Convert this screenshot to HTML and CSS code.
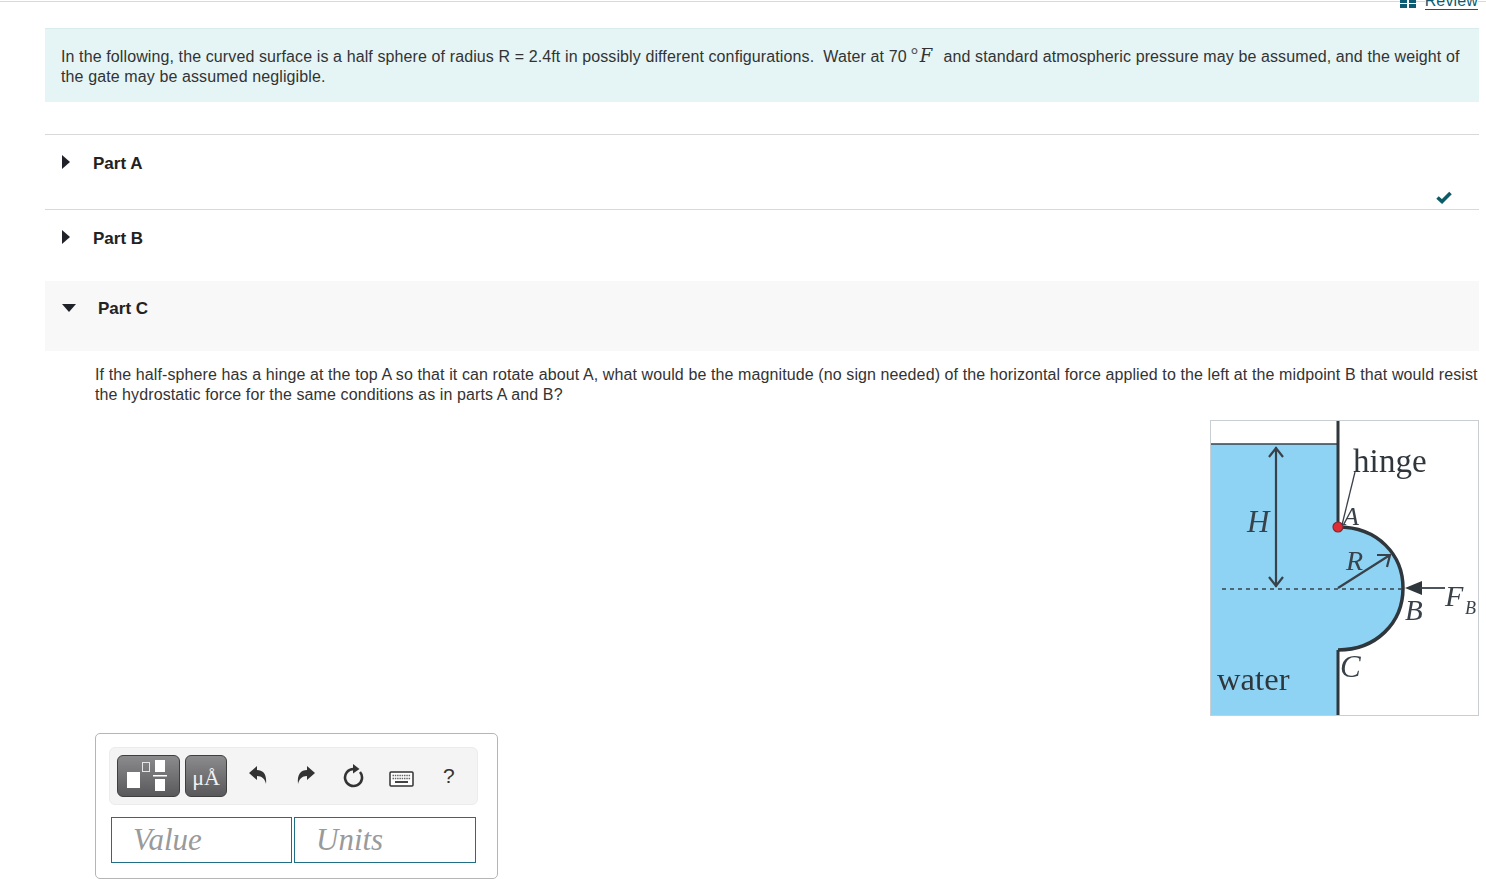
FILE: index.html
```html
<!DOCTYPE html>
<html lang="en">
<head>
<meta charset="utf-8">
<title>Part C</title>
<link rel="stylesheet" href="styles.css">
</head>
<body>
<div class="page">
  <header class="topbar">
    <a class="review" href="#">
      <svg class="review-icon" width="16" height="9" viewBox="0 0 16 9"><path d="M0 0h7v3H0zM9 0h7v3H9zM0 4h7v4H0zM9 4h7v4H9z" fill="#0b5c72"/></svg>
      <span class="review-text">Review</span>
    </a>
  </header>
  <section class="intro">
    <p>In the following, the curved surface is a half sphere of radius R = 2.4ft in possibly different configurations.&nbsp; Water at 70 <span class="deg">°</span><i class="mathf">F</i>&nbsp; and standard atmospheric pressure may be assumed, and the weight of the gate may be assumed negligible.</p>
  </section>
  <section class="part part-a">
    <svg class="caret" width="8" height="14" viewBox="0 0 8 14"><path d="M0 0l8 7-8 7z" fill="#1f2229"/></svg>
    <h2>Part A</h2>
    <svg class="check" width="16" height="13" viewBox="0 0 16 13"><path d="M1.500 6.500l4.500 4L14.500 2" fill="none" stroke="#0b5c66" stroke-width="3.600"/></svg>
  </section>
  <section class="part part-b">
    <svg class="caret" width="8" height="14" viewBox="0 0 8 14"><path d="M0 0l8 7-8 7z" fill="#1f2229"/></svg>
    <h2>Part B</h2>
  </section>
  <section class="part-c">
    <svg class="caret-down" width="14" height="8" viewBox="0 0 14 8"><path d="M0 0h14L7 8z" fill="#1f2229"/></svg>
    <h2>Part C</h2>
  </section>
  <section class="question">
    <p>If the half-sphere has a hinge at the top A so that it can rotate about A, what would be the magnitude (no sign needed) of the horizontal force applied to the left at the midpoint B that would resist the hydrostatic force for the same conditions as in parts A and B?</p>
    <figure class="diagram">
      <svg width="269" height="296" viewBox="0 0 269 296">
        <rect x="0.500" y="0.500" width="268" height="295" fill="#fff" stroke="#c9ced2"/>
        <path d="M1 24H128V107C168 107 193 135 193 168C193 203 166 230 128 230V295H1Z" fill="#8ed3f3"/>
        <path d="M1 24H128" stroke="#39424a" stroke-width="1.500"/>
        <path d="M128 1V107M128 230V295" stroke="#2f363c" stroke-width="3"/>
        <path d="M128 107C168 107 193 135 193 168C193 203 166 230 128 230" fill="none" stroke="#2f363c" stroke-width="3.500"/>
        <path d="M12 169H192" stroke="#39424a" stroke-width="1.500" stroke-dasharray="4 4"/>
        <path d="M66 27V167M59 37l7-9 7 9M59 157l7 9 7-9" fill="none" stroke="#39424a" stroke-width="2.200"/>
        <path d="M128 168L180 135M167 135h13l-3 12" fill="none" stroke="#39424a" stroke-width="2.200"/>
        <path d="M145 52L132 105" stroke="#39424a" stroke-width="1.300"/>
        <circle cx="128" cy="107" r="5" fill="#e02b35" stroke="#7e2b33" stroke-width="1.200"/>
        <path d="M195 168l17-7v14z" fill="#2f363c"/>
        <path d="M210 168H235" stroke="#39424a" stroke-width="1.800"/>
        <text class="dia-t" x="143" y="52" font-size="33">hinge</text>
        <text class="dia-t" x="7" y="270" font-size="32.500">water</text>
        <text class="dia-i" x="37" y="112" font-size="31">H</text>
        <text class="dia-i" x="133" y="105" font-size="26">A</text>
        <text class="dia-i" x="136" y="150" font-size="28">R</text>
        <text class="dia-i" x="195" y="200" font-size="29">B</text>
        <text class="dia-i" x="130" y="257" font-size="31">C</text>
        <text class="dia-i" x="235" y="186" font-size="30">F</text>
        <text class="dia-i" x="255" y="194" font-size="18">B</text>
      </svg>
    </figure>
  </section>
  <section class="answer">
    <div class="toolbar">
      <button class="tool tool-wide" type="button" aria-label="Templates">
        <svg width="61" height="40" viewBox="0 0 61 40">
          <rect x="9" y="16" width="13" height="16" fill="#fff"/>
          <rect x="24.500" y="6.500" width="7" height="9" fill="none" stroke="#e6e6e6"/>
          <rect x="37" y="4" width="10" height="12" fill="#fff"/>
          <rect x="35" y="19" width="14" height="1.500" fill="#fff"/>
          <rect x="37" y="23" width="10" height="12" fill="#fff"/>
        </svg>
      </button>
      <button class="tool tool-unit" type="button">μÅ</button>
      <svg class="action a-undo" width="18" height="20" viewBox="0 0 18 20"><path d="M0 7L8 0v4c6 0 10 4 9 14-1-5-4-8-9-8v4z" fill="#333"/></svg>
      <svg class="action a-redo" width="18" height="20" viewBox="0 0 18 20"><path d="M18 7L10 0v4C4 4 0 8 1 18c1-5 4-8 9-8v4z" fill="#333"/></svg>
      <svg class="action a-reset" width="22" height="24" viewBox="0 0 22 24"><path d="M10.500 5A8.500 8.500 0 1 0 17 8" fill="none" stroke="#333" stroke-width="2.600"/><path d="M10 0l6.500 5-6.500 4.500z" fill="#333"/></svg>
      <svg class="action a-kbd" width="25" height="16" viewBox="0 0 25 16"><rect x="1" y="1" width="23" height="14" rx="1" fill="#fff" stroke="#333" stroke-width="1.500"/><path d="M3.500 4.500h18M3.500 7.500h18" stroke="#666" stroke-width="1.500" stroke-dasharray="1.500 .8"/><path d="M6 11h13" stroke="#444" stroke-width="2"/></svg>
      <span class="help">?</span>
    </div>
    <div class="inputs">
      <div class="field field-value">Value</div>
      <div class="field field-units">Units</div>
    </div>
  </section>
</div>
</body>
</html>
```
FILE: styles.css
```css
* { box-sizing: border-box; }
html, body { margin: 0; padding: 0; background: #fff; }
body { font-family: "Liberation Sans", Arial, sans-serif; color: #333; font-size: 16px; overflow: hidden; }
p { margin: 0; }
h2 { margin: 1px 0 0; font-size: 17px; font-weight: bold; color: #222; line-height: 20px; }
.page { height: 879px; padding: 0 7px 0 45px; overflow: hidden; }
.topbar { height: 28px; margin: 0 -7px 0 -45px; padding-right: 8px; background: linear-gradient(#fff 0, #fff 1px, #d9d9d9 1px, #d9d9d9 2px, #fff 2px); display: flex; justify-content: flex-end; overflow: hidden; }
.review { display: flex; align-items: flex-start; height: 10px; color: #0b5c72; text-decoration: none; }
.review-icon { display: block; margin-right: 9px; background: #fff; }
.review-text { font-size: 16px; letter-spacing: .15px; line-height: 16px; margin-top: -7px; height: 17px; border-bottom: 1px solid #0b5c72; background: #fff; }
.intro { height: 74px; background: #e5f5f6; border-top: 1px solid #d8ecee; padding: 18px 16px 0; line-height: 20px; letter-spacing: .11px; }
.deg { font-size: 21px; vertical-align: -1px; line-height: 0; color: #555; margin-left: -1px; margin-right: 1px; }
.mathf { font-family: "DejaVu Serif", "Liberation Serif", serif; font-size: 18px; line-height: 0; color: #333; margin-right: 2px; }
.part { height: 75px; border-top: 1px solid #d9d9d9; position: relative; display: flex; align-items: flex-start; padding: 18px 0 0 17px; }
.part-a { margin-top: 32px; }
.part-b { height: 72px; }
.part h2 { margin-left: 23px; }
.caret { margin-top: 2px; flex: none; }
.check { position: absolute; right: 27px; top: 56px; }
.part-c { height: 70px; background: #f8f8f8; display: flex; align-items: flex-start; padding: 17px 0 0 17px; }
.part-c h2 { margin-left: 22px; }
.caret-down { margin-top: 6px; flex: none; }
.question { padding: 14px 0 0 50px; line-height: 20px; letter-spacing: .105px; display: flex; flex-direction: column; }
.question p { margin-right: -5px; }
.diagram { margin: 15px 0 0; align-self: flex-end; height: 296px; }
.diagram svg { display: block; filter: blur(.35px); }
.dia-t { font-family: "Liberation Serif", serif; fill: #2f363c; }
.dia-i { font-family: "Liberation Serif", serif; font-style: italic; fill: #39424a; }
.answer { width: 403px; height: 146px; margin: 17px 0 0 50px; border: 1px solid #b5b5b5; border-radius: 5px; padding: 13px 13px 0 13px; }
.toolbar { width: 369px; height: 58px; background: #f4f4f4; border: 1px solid #ececec; border-radius: 6px; display: flex; align-items: flex-start; position: relative; padding: 7px 0 0 7px; }
.tool { border: 1px solid #3f3f3f; border-radius: 6px; background: linear-gradient(#8b8b8e, #59595c); color: #fff; padding: 0; display: flex; align-items: center; justify-content: center; height: 42px; }
.tool-wide { width: 63px; }
.tool-unit { width: 42px; margin-left: 5px; font-family: "Liberation Serif", serif; font-size: 22px; color: #f2f2f2; padding-top: 4px; }
.action { display: block; flex: none; }
.a-undo { margin: 11px 0 0 22px; }
.a-redo { margin: 11px 0 0 30px; }
.a-reset { margin: 9px 0 0 28px; }
.a-kbd { margin: 16px 0 0 24px; }
.help { margin: 9px 0 0 29px; font-size: 21px; line-height: 24px; color: #333; }
.inputs { display: flex; gap: 2px; margin-top: 12px; margin-left: 2px; }
.field { height: 46px; border: 1px solid #1f6f86; font-family: "Liberation Serif", serif; font-style: italic; font-size: 31px; color: #9a9a9a; padding: 4px 0 0 21px; line-height: 36px; background: #fff; }
.field-value { width: 181px; }
.field-units { width: 182px; }
```
